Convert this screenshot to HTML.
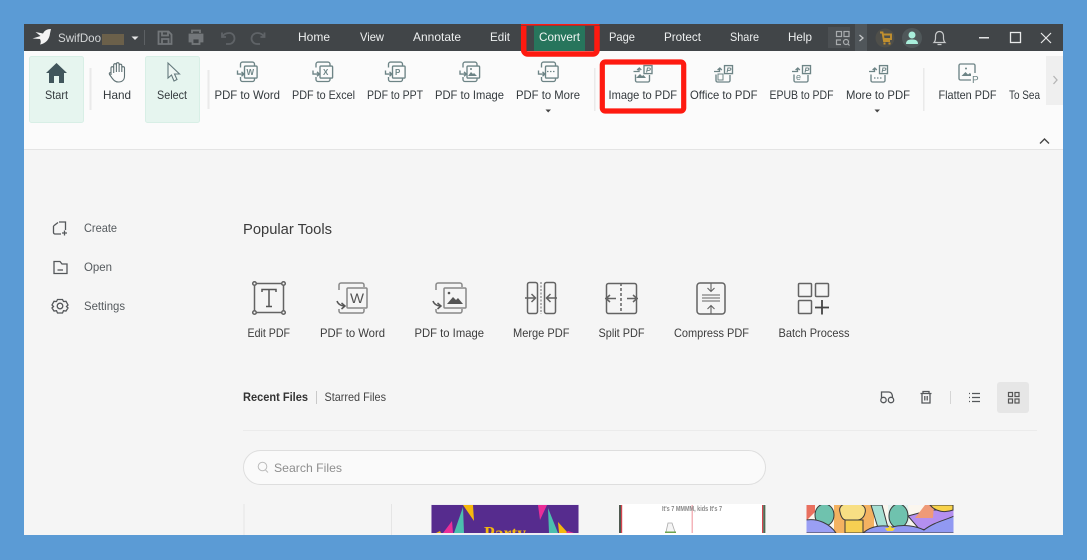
<!DOCTYPE html>
<html><head><meta charset="utf-8"><style>
html,body{margin:0;padding:0;background:#5b9bd5}
svg{display:block}
text{font-family:"Liberation Sans",sans-serif;font-size:12px}
.m{fill:#eef0f0}
.r{fill:#33393d}
.c{fill:#555a5e}
.l{fill:#3c3c3c}
.ri{fill:none;stroke:#6d8486;stroke-width:1.35}
.ti{fill:none;stroke:#73777a;stroke-width:1.8}
.pi{fill:none;stroke:#636363;stroke-width:1.5}
.ln{fill:none;stroke:#54575a;stroke-width:1.3}
.lt{font-size:8px;font-weight:bold;fill:#6d8486}
</style></head><body>
<svg width="1087" height="560" viewBox="0 0 1087 560" xmlns="http://www.w3.org/2000/svg">
<defs>
<g id="from"><path class="ri" d="M4 6V2.600A2 2 0 0 1 6 .6H16A2 2 0 0 1 18 2.600V4M4 15.500V18A2 2 0 0 0 6 20H16A2 2 0 0 0 18 18V16.500"/><rect class="ri" x="8" y="4.600" width="12.600" height="12" rx="1"/><path class="ri" d="M1 9V12.600H7M5 10.400L7.400 12.600L5 14.800"/></g>
<g id="to"><path class="ri" d="M1 6.500H6.500V3.500M4.600 5L6.800 3L8.800 5"/><path class="ri" d="M3 9.500V15.500A1.500 1.500 0 0 0 4.500 17H15.500A1.500 1.500 0 0 0 17 15.500V10"/><rect class="ri" x="11.500" y="0.600" width="8" height="8" fill="#fbfbfb"/><text x="13.400" y="7.300" style="font-size:7.500px;font-style:italic;font-weight:bold;fill:#6d8486">P</text></g>
<clipPath id="t1"><rect x="431.500" y="505" width="147" height="28"/></clipPath>
<clipPath id="t3"><rect x="806.500" y="505" width="147" height="28"/></clipPath>
</defs>

<rect width="1087" height="560" fill="#5b9bd5"/>
<rect x="24" y="24" width="1039" height="511" fill="#f5f5f5"/>
<rect x="24" y="24" width="1039" height="27" fill="#414548"/>
<rect x="24" y="51" width="1039" height="98" fill="#fbfbfb"/>
<rect x="24" y="149" width="1039" height="1" fill="#e4e4e4"/>

<!-- title bar -->
<path d="M51 29C47 29 44.500 30.500 43 33.500L35.500 32L40.500 36L32.500 38.500L40 39C41 41 41 43 40 44.500C46 43.500 49.500 39 50 33.500Z" fill="#f4f4f4"/>
<text x="58" y="42" textLength="43" lengthAdjust="spacingAndGlyphs" fill="#d5d7d8">SwifDoo</text>
<rect x="102" y="34" width="22" height="11" fill="#6b604a"/>
<path d="M131.500 36.500H138.500L135 40Z" fill="#e6e6e6"/>
<rect x="144" y="30" width="1" height="15" fill="#5d6164"/>
<g class="ti">
<path d="M158.500 31.500H168.500L171.500 34.500V44H158.500Z"/><path d="M162 31.500V35.500H168V31.500M162 44V39H168.500V44"/>
<path d="M192 33V30.500H200V33" /><path d="M189.500 34.500H202.500V41.500H189.500Z" fill="#73777a"/><rect x="192.500" y="38.500" width="7" height="5.500" fill="#414548"/>
<path d="M222 32.500V37H226M222.500 36.500C224 33.500 227 33 229.500 33C232.500 33 234.500 35.500 234.500 38.500C234.500 41.500 232 44 229 44H226" stroke="#5f6367"/>
<path d="M264.500 32.500V37H260.500M264 36.500C262 33.500 259.500 33 257.500 33C254 33 251.500 35.500 251.500 38.500C251.500 41.500 254 44 257 44H260" stroke="#5f6367"/>
</g>
<text class="m" x="298" y="41" textLength="32" lengthAdjust="spacingAndGlyphs">Home</text>
<text class="m" x="360" y="41" textLength="24" lengthAdjust="spacingAndGlyphs">View</text>
<text class="m" x="413" y="41" textLength="48" lengthAdjust="spacingAndGlyphs">Annotate</text>
<text class="m" x="490" y="41" textLength="20" lengthAdjust="spacingAndGlyphs">Edit</text>
<rect x="534" y="26" width="51" height="25" fill="#27755c"/>
<text x="539" y="41" textLength="41" lengthAdjust="spacingAndGlyphs" fill="#f0f5f3">Convert</text>
<text class="m" x="609" y="41" textLength="26" lengthAdjust="spacingAndGlyphs">Page</text>
<text class="m" x="664" y="41" textLength="37" lengthAdjust="spacingAndGlyphs">Protect</text>
<text class="m" x="730" y="41" textLength="29" lengthAdjust="spacingAndGlyphs">Share</text>
<text class="m" x="788" y="41" textLength="24" lengthAdjust="spacingAndGlyphs">Help</text>
<rect x="828" y="27" width="22" height="21" fill="#4c5053"/>
<g fill="none" stroke="#a8abad" stroke-width="1.200">
<rect x="836.500" y="31.500" width="5" height="5"/><rect x="844" y="31.500" width="5" height="5"/>
<path d="M841 40H836.500V44.500H841"/><circle cx="846" cy="42" r="2.500"/><path d="M848 44L849.500 45.500"/>
</g>
<rect x="855" y="24" width="12" height="27" fill="#50565a"/>
<path d="M859.500 35L863 38L859.500 41" fill="none" stroke="#c4c6c7" stroke-width="1.300"/>
<circle cx="885" cy="38" r="9.500" fill="#4f4f4a"/>
<path d="M880 32.500H882.500L884 41H890M882.800 34.500H891V39H884" fill="none" stroke="#c18f2e" stroke-width="1.900"/><rect x="883.500" y="42.500" width="2" height="2" fill="#c18f2e"/><rect x="888.500" y="42.500" width="2" height="2" fill="#c18f2e"/>
<circle cx="912" cy="38" r="10" fill="#50585a"/>
<circle cx="912" cy="35" r="3.500" fill="#a9eedb"/><path d="M906 44C906 40 909 39.500 912 39.500C915 39.500 918 40 918 44Z" fill="#a9eedb"/>
<path d="M934 42.500H945C943 40.500 943.500 38 943.500 36C943.500 33.500 942 31.500 939.500 31.500C937 31.500 935.500 33.500 935.500 36C935.500 38 936 40.500 934 42.500ZM937.500 44.500H941.500" fill="none" stroke="#c8cacb" stroke-width="1.200"/>
<rect x="979" y="37" width="10" height="1.500" fill="#e2e3e4"/>
<rect x="1010.500" y="32.500" width="10" height="10" fill="none" stroke="#e8e9e9" stroke-width="1.300"/>
<path d="M1041 33L1051 43M1051 33L1041 43" stroke="#e8e9e9" stroke-width="1.200"/>

<!-- ribbon -->
<rect x="29.500" y="56.500" width="54" height="66" rx="2" fill="#e6f5ef" stroke="#d8efe6"/>
<rect x="145.500" y="56.500" width="54" height="66" rx="2" fill="#e6f5ef" stroke="#d8efe6"/>
<path d="M46 73L56.500 63L67 73H64V83H59V76H54V83H49V73Z" fill="#41565c"/>
<path d="M111 75V68a1.300 1.300 0 0 1 2.700 0V73M113.700 72V65a1.300 1.300 0 0 1 2.700 0V72M116.400 72V64a1.300 1.300 0 0 1 2.700 0V72M119.100 72V65.500a1.300 1.300 0 0 1 2.700 0V72M121.800 72V68a1.300 1.300 0 0 1 2.700 0V76C124.500 80 122 82 118.500 82C115 82 113.500 80 112 78L109.500 74.500C108.800 72.500 110.500 72 111 73.500" fill="none" stroke="#5e7073" stroke-width="1.100"/>
<path d="M168 63V78L171.500 75L174 81L177 79.500L174.500 74H179.500Z" fill="#eef7f3" stroke="#64797c" stroke-width="1.100"/>
<g fill="#eaeaea"><rect x="89.500" y="68" width="2" height="42"/><rect x="207.500" y="70" width="2" height="39"/><rect x="594" y="68" width="1.500" height="43"/><rect x="923" y="68" width="1.500" height="43"/></g>

<use href="#from" x="236.500" y="61.500"/><text class="lt" x="246.500" y="75">W</text>
<use href="#from" x="312" y="61.500"/><text class="lt" x="323" y="75">X</text>
<use href="#from" x="384.500" y="61.500"/><text class="lt" x="395" y="75">P</text>
<use href="#from" x="459" y="61.500"/><path d="M468 76L471 72L473 74L474 73L477 76Z" fill="#6d8486"/><circle cx="471" cy="69" r="1" fill="#6d8486"/>
<use href="#from" x="537.500" y="61.500"/><path d="M547 71.500H555" stroke="#6d8486" stroke-dasharray="1.500 1.500" stroke-width="1.300"/>

<use href="#to" x="632.500" y="65"/><path d="M636 78L640 74L642 76L643.500 75L646 78Z" fill="#6d8486"/>
<use href="#to" x="713" y="65"/><rect x="718" y="74" width="5" height="6" fill="none" stroke="#6d8486"/>
<use href="#to" x="791" y="65"/><text x="796" y="80" style="font-size:9px;fill:#6d8486">e</text>
<use href="#to" x="868" y="65"/><path d="M874 78H882" stroke="#6d8486" stroke-dasharray="1.500 1.500" stroke-width="1.300"/>
<rect class="ri" x="959" y="64" width="16" height="16" rx="1.500"/><path d="M961.500 76L965.500 72L968 74.500L970 73L973 76Z" fill="#6d8486"/><circle cx="966" cy="68.500" r="1" fill="#6d8486"/>
<rect x="971" y="73" width="8" height="9" fill="#fbfbfb"/><text x="972" y="83" style="font-size:10px;fill:#6d8486">P</text>

<text class="r" x="45" y="99" textLength="23" lengthAdjust="spacingAndGlyphs">Start</text>
<text class="r" x="103" y="99" textLength="28" lengthAdjust="spacingAndGlyphs">Hand</text>
<text class="r" x="157" y="99" textLength="30" lengthAdjust="spacingAndGlyphs">Select</text>
<text class="r" x="214.500" y="99" textLength="65.500" lengthAdjust="spacingAndGlyphs">PDF to Word</text>
<text class="r" x="292" y="99" textLength="63" lengthAdjust="spacingAndGlyphs">PDF to Excel</text>
<text class="r" x="367" y="99" textLength="56" lengthAdjust="spacingAndGlyphs">PDF to PPT</text>
<text class="r" x="435" y="99" textLength="69" lengthAdjust="spacingAndGlyphs">PDF to Image</text>
<text class="r" x="516" y="99" textLength="64" lengthAdjust="spacingAndGlyphs">PDF to More</text>
<text class="r" x="608.500" y="99" textLength="68.500" lengthAdjust="spacingAndGlyphs">Image to PDF</text>
<text class="r" x="690" y="99" textLength="67.500" lengthAdjust="spacingAndGlyphs">Office to PDF</text>
<text class="r" x="769.500" y="99" textLength="64" lengthAdjust="spacingAndGlyphs">EPUB to PDF</text>
<text class="r" x="846" y="99" textLength="64" lengthAdjust="spacingAndGlyphs">More to PDF</text>
<text class="r" x="938.500" y="99" textLength="58" lengthAdjust="spacingAndGlyphs">Flatten PDF</text>
<text class="r" x="1009" y="99" textLength="31" lengthAdjust="spacingAndGlyphs">To Sea</text>
<path d="M545.500 109.500H551L548.200 112.500Z" fill="#444"/>
<path d="M874.500 109.500H880L877.200 112.500Z" fill="#444"/>
<rect x="1046" y="56" width="17" height="49" fill="#efefef"/>
<path d="M1053.500 76L1057 80L1053.500 84" fill="none" stroke="#b5b5b5" stroke-width="1.300"/>
<path d="M1040 143.500L1044.500 139L1049 143.500" fill="none" stroke="#444" stroke-width="1.400"/>

<!-- red highlights -->
<path d="M523.700 26V50A4 4 0 0 0 527.700 54H593A4 4 0 0 0 597 50V26" fill="none" stroke="#fe1a10" stroke-width="5.500"/>
<rect x="521" y="24" width="78.500" height="1.500" fill="#fe1a10"/>
<rect x="602.300" y="62" width="81.400" height="49" rx="3" fill="none" stroke="#fe1a10" stroke-width="5.200"/>

<!-- left nav -->
<path d="M59 222H65.500V230M53.500 226L58 222.500M53.500 226V232.500A1.500 1.500 0 0 0 55 234H61" class="ln"/><path d="M64.500 230.500V235.500M62 233H67" class="ln" stroke-width="1"/>
<path d="M54 261.500H60L62 264H67V273.500H54Z" class="ln"/><path d="M57.500 270H63" class="ln"/>
<circle cx="60" cy="306" r="2.800" class="ln"/><path d="M57.500 299.500H62.500L63.500 301.500L66 301.300L68 305L66.500 306.500L68 308L66 311L63.500 310.700L62.500 313H57.500L56.500 310.700L54 311L52 308L53.500 306.500L52 305L54 301.300L56.500 301.500Z" class="ln"/>
<text class="c" x="84" y="232" textLength="33" lengthAdjust="spacingAndGlyphs">Create</text>
<text class="c" x="84" y="271" textLength="28" lengthAdjust="spacingAndGlyphs">Open</text>
<text class="c" x="84" y="310" textLength="41" lengthAdjust="spacingAndGlyphs">Settings</text>

<!-- popular tools -->
<text x="243" y="234" textLength="89" lengthAdjust="spacingAndGlyphs" style="font-size:15px" fill="#3b3b3b">Popular Tools</text>
<g class="pi">
<rect x="254.500" y="283.500" width="29" height="29"/>
<circle cx="254.500" cy="283.500" r="1.800" fill="#f5f5f5"/><circle cx="283.500" cy="283.500" r="1.800" fill="#f5f5f5"/><circle cx="254.500" cy="312.500" r="1.800" fill="#f5f5f5"/><circle cx="283.500" cy="312.500" r="1.800" fill="#f5f5f5"/>
<path d="M262 292V289.500H276V292M269 289.500V306.500M266 306.500H272" stroke="#555"/>

<path d="M339 290V285A2 2 0 0 1 341 283H362A2 2 0 0 1 364 285V287M339 309V311A2 2 0 0 0 341 313H362A2 2 0 0 0 364 311V309" stroke="#888"/>
<rect x="347" y="288" width="20" height="20" rx="1" stroke="#888"/>
<path d="M337 301C338 304 341 306 345 306M341.500 303L345 306L341.500 309" stroke="#555"/>

<path d="M436 290V285A2 2 0 0 1 438 283H460A2 2 0 0 1 462 285V287M436 309V311A2 2 0 0 0 438 313H460A2 2 0 0 0 462 311V309" stroke="#888"/>
<rect x="444" y="288" width="22" height="20" rx="1" stroke="#888"/>
<path d="M433 301C434 304 437 306 441 306M437.500 303L441 306L437.500 309" stroke="#555"/>

<rect x="527.500" y="282.500" width="10" height="31" rx="2"/><rect x="544.500" y="282.500" width="11" height="31" rx="2"/>
<path d="M541 282V314" stroke-dasharray="2 1.500" stroke="#999"/>
<path d="M525 298H535M531.500 294L535.500 298L531.500 302M557 298H547M550.500 294L546.500 298L550.500 302"/>

<rect x="606.500" y="283.500" width="30" height="30" rx="2"/>
<path d="M621 283V314" stroke-dasharray="3 2"/>
<path d="M605 298.500H616M610 295L606 298.500L610 302M638 298.500H627M633 295L637 298.500L633 302"/>

<rect x="697" y="283" width="28" height="31" rx="3"/>
<path d="M711 283V291M707.500 288L711 291.500L714.500 288M711 314V306M707.500 309L711 305.500L714.500 309M702 295H720M702 298H720M702 301H720" stroke-width="1.100"/>

<rect x="798.500" y="283.500" width="13" height="13" rx="1"/><rect x="815.500" y="283.500" width="13" height="13" rx="1"/><rect x="798.500" y="300.500" width="13" height="13" rx="1"/>
<path d="M815 307.500H829M822 300V314.500" stroke-width="1.800" stroke="#444"/>
</g>
<text x="350" y="303" style="font-size:14px" textLength="14" lengthAdjust="spacingAndGlyphs" fill="#555">W</text>
<path d="M447 304L453 297L456 300L458 298L463 304Z" fill="#555"/><circle cx="449" cy="293" r="1.300" fill="#555"/>

<text class="l" x="247.500" y="337" textLength="42.500" lengthAdjust="spacingAndGlyphs">Edit PDF</text>
<text class="l" x="320" y="337" textLength="65" lengthAdjust="spacingAndGlyphs">PDF to Word</text>
<text class="l" x="414.500" y="337" textLength="69.500" lengthAdjust="spacingAndGlyphs">PDF to Image</text>
<text class="l" x="513" y="337" textLength="56.500" lengthAdjust="spacingAndGlyphs">Merge PDF</text>
<text class="l" x="598.500" y="337" textLength="46" lengthAdjust="spacingAndGlyphs">Split PDF</text>
<text class="l" x="674" y="337" textLength="75" lengthAdjust="spacingAndGlyphs">Compress PDF</text>
<text class="l" x="778.500" y="337" textLength="71" lengthAdjust="spacingAndGlyphs">Batch Process</text>

<!-- recent -->
<text x="243" y="401" textLength="65" lengthAdjust="spacingAndGlyphs" font-weight="bold" fill="#333">Recent Files</text>
<rect x="316" y="391" width="1" height="13" fill="#c9c9c9"/>
<text x="324.500" y="401" textLength="61.500" lengthAdjust="spacingAndGlyphs" fill="#444">Starred Files</text>
<g class="ln">
<circle cx="883.500" cy="400" r="2.700"/><circle cx="891" cy="400" r="2.700"/><path d="M881.500 398V392H888.500C891 392 892.500 394 892.500 397.500"/>
<path d="M920.500 393.500H931.500M923 393.500V391.500H929V393.500M922 393.500V403H930V393.500M924.800 396V400.500M927.200 396V400.500"/>
<path d="M969 393.500H970M972 393.500H980M969 397.500H970M972 397.500H980M969 401.500H970M972 401.500H980"/>
</g>
<rect x="950" y="391" width="1" height="13" fill="#d5d5d5"/>
<rect x="997" y="382" width="32" height="31" rx="3" fill="#e6e6e6"/>
<g fill="none" stroke="#555" stroke-width="1.200"><rect x="1008.500" y="392.500" width="4" height="4"/><rect x="1015" y="392.500" width="4" height="4"/><rect x="1008.500" y="399" width="4" height="4"/><rect x="1015" y="399" width="4" height="4"/></g>
<rect x="243" y="430" width="794" height="1" fill="#ebebeb"/>
<rect x="243.500" y="450.500" width="522" height="34" rx="17" fill="#fafafa" stroke="#dedede"/>
<circle cx="262.500" cy="466.500" r="4.300" fill="none" stroke="#bcbcbc"/><path d="M265.500 470L268 472.500" stroke="#bcbcbc"/>
<text x="274" y="472" textLength="68" lengthAdjust="spacingAndGlyphs" fill="#8e8e8e">Search Files</text>

<!-- thumbnails -->
<rect x="243.500" y="504" width="1" height="31" fill="#e5e5e5"/>
<rect x="391" y="504" width="1" height="31" fill="#e5e5e5"/>
<rect x="431" y="504" width="148" height="31" fill="#ededf3"/>
<g clip-path="url(#t1)">
<rect x="431" y="505" width="148" height="28" fill="#562c8e"/>
<path d="M463 505H473L474 521Z" fill="#f5b80c"/>
<path d="M463 507L454 533H464Z" fill="#4bbfae"/>
<path d="M452 521L443 533H453Z" fill="#ea2e98"/>
<path d="M440 531L436 533H441Z" fill="#f5b80c"/>
<path d="M538 505H547L540 520Z" fill="#ea2e98"/>
<path d="M548 508L549 533H558Z" fill="#4bbfae"/>
<path d="M558 522L559 533H568Z" fill="#f5b80c"/>
<path d="M568 531L566 533H574Z" fill="#ea2e98"/>
<text x="484" y="539" textLength="42" lengthAdjust="spacingAndGlyphs" style="font-size:18px;font-weight:bold;font-family:'Liberation Serif',serif" fill="#f2b70f">Party</text>
</g>
<rect x="619" y="504" width="147" height="31" fill="#fff"/>
<rect x="619" y="505" width="2" height="28" fill="#4f5a50"/><rect x="621" y="505" width="1.200" height="28" fill="#d5444e"/>
<rect x="762" y="505" width="1.200" height="28" fill="#d5444e"/><rect x="763.200" y="505" width="2.200" height="28" fill="#4f6a55"/>
<rect x="691.500" y="505" width="1.500" height="28" fill="#f4b4ba"/>
<text x="662" y="511" textLength="60" lengthAdjust="spacingAndGlyphs" style="font-size:7px;font-weight:bold" fill="#888">It's 7 MMMM, kids It's 7</text>
<path d="M666 532L668 523H672L675 532Z" fill="#f5f5f5" stroke="#aaa" stroke-width=".8"/><rect x="665" y="531.500" width="11" height="1.500" fill="#6ea550"/>
<rect x="806" y="504" width="148" height="31" fill="#f4f4f8"/>
<g clip-path="url(#t3)">
<rect x="806" y="505" width="148" height="28" fill="#fbf6ee"/>
<path d="M806 505H815V512L806 521Z" fill="#e9705f"/>
<rect x="834" y="505" width="40" height="28" fill="#f4b261"/>
<ellipse cx="824.500" cy="515" rx="9.500" ry="11" fill="#6fc2ae" stroke="#3a3a3a"/>
<path d="M806 533V520C818 518 830 524 836 533Z" fill="#9a9ff4" stroke="#3a3a3a"/>
<path d="M840 512C838 505 846 502 852 504C860 502 867 506 865 513C864 518 860 520 858 520H846C843 520 841 517 840 512Z" fill="#f8df84" stroke="#3a3a3a"/>
<rect x="845" y="520" width="18" height="13" fill="#f7cf52" stroke="#3a3a3a"/>
<path d="M871 505H882L888 528H878Z" fill="#a6dfd3" stroke="#3a3a3a"/>
<path d="M888 505H908L910 528H888Z" fill="#e3f2ef"/>
<ellipse cx="898.500" cy="516" rx="9.500" ry="12" fill="#6fc2ae" stroke="#3a3a3a"/>
<path d="M908 516L930 510H954V526L920 530Z" fill="#b48ff0" stroke="#3a3a3a"/>
<path d="M915 518L925 505H934L933 518Z" fill="#ef9a78"/>
<path d="M930 505H953V510C945 513 936 512 930 505Z" fill="#f8d24a" stroke="#3a3a3a"/>
<path d="M863 533C872 525 884 525 892 527C904 524 916 526 924 530C934 522 946 520 954 516V533Z" fill="#9199f2" stroke="#3a3a3a"/>
<path d="M890 525L892 528H895L893 531H887L885 528H888Z" fill="#f7d33c"/>
</g>
<rect x="0" y="535" width="1087" height="25" fill="#5b9bd5"/>
</svg>
</body></html>
